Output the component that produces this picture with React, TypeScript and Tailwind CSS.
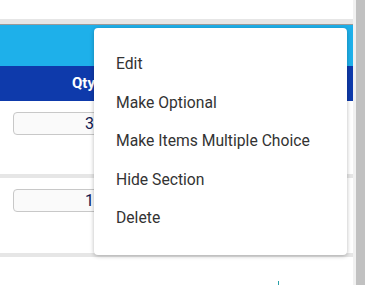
import React from "react";

const items = ["Edit", "Make Optional", "Make Items Multiple Choice", "Hide Section", "Delete"];

function QtyInput({ value }: { value: string }) {
  return (
    <div className="ml-[13px] w-[90px] h-[23px] rounded-[4px] border border-[#c8c8c8] bg-[#fafafa] flex items-center justify-end pr-[8px] text-[16px] text-[#101850]">
      {value}
    </div>
  );
}

export default function App() {
  return (
    <div
      className="relative w-[365px] h-[285px] overflow-hidden bg-white flex"
      style={{ fontFamily: "Roboto, 'Liberation Sans', sans-serif" }}
    >
      <div className="w-[353px] flex flex-col">
        <div className="h-[19px] bg-white" />
        <div className="h-[5px] bg-[#e6e6e6]" />
        <div className="h-[1px] bg-[#9a9a9a]" />
        <div className="h-[41px] bg-[#1eb0ea]" />
        <div className="h-[35px] bg-[#0e3aab] flex items-center pl-[72px]">
          <span className="text-white font-bold text-[15px]">Qty</span>
        </div>
        <div className="h-[73px] pt-[11px]">
          <QtyInput value="3" />
        </div>
        <div className="h-[4px] bg-[#e6e6e6]" />
        <div className="h-[75px] pt-[11px]">
          <QtyInput value="1" />
        </div>
        <div className="h-[4px] bg-[#e6e6e6]" />
        <div className="flex-1 pl-[278px] pt-[24px]">
          <div className="w-[1px] h-[4px] bg-[#2aa0a8]" />
        </div>
      </div>
      <div className="w-[3px] bg-[#f1f1f1]" />
      <div className="w-[9px] bg-[#c1c1c1]" />

      <div className="absolute left-[94px] top-[28px] w-[253px] h-[227px] bg-white rounded-[4px] shadow-[0_1px_4px_rgba(0,0,0,0.28)] pt-[17px] flex flex-col">
        {items.map((t) => (
          <div key={t} className="h-[38.4px] flex items-center pl-[22px] text-[15.7px] text-[#333333]">
            {t}
          </div>
        ))}
      </div>
    </div>
  );
}
